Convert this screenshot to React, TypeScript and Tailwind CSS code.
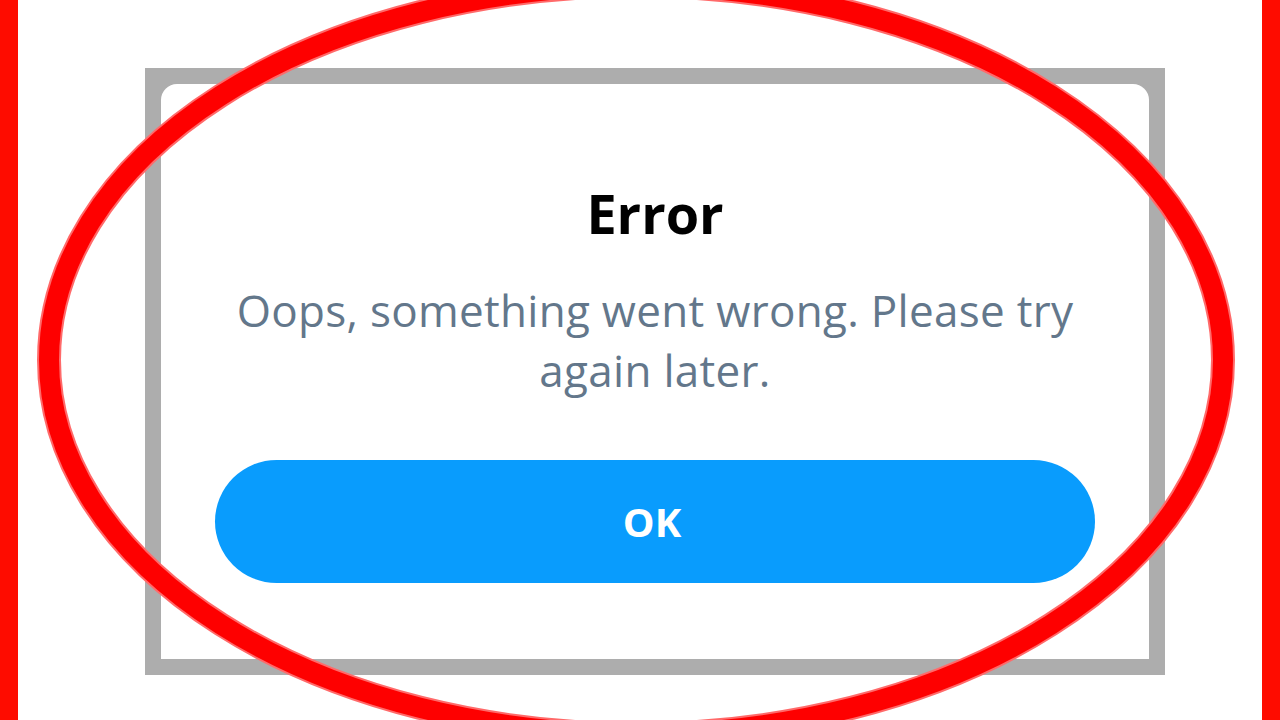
export default function App() {
  return (
    <div className="relative w-[1280px] h-[720px] bg-white flex overflow-hidden font-['Open_Sans',sans-serif]">
      <div className="w-[18px] bg-[#fe0c00]" />
      <div className="flex-1 pl-[127px] pt-[68px]">
        <div className="w-[1020px] h-[607px] bg-[#adadad] p-[16px]">
          <div className="h-full bg-white rounded-t-[16px] flex flex-col items-center pt-[97px] px-[54px] pb-[76px]">
            <h1 className="text-[54px] leading-[64px] font-bold text-black">Error</h1>
            <p className="mt-[35px] text-[44px] leading-[60px] tracking-[0.3px] text-[#63778b] text-center">
              Oops, something went wrong. Please try
              <br />
              again later.
            </p>
            <button
              type="button"
              className="mt-[60px] w-full h-[123px] rounded-full bg-[#099cfd] text-white text-[40px] font-bold pr-[6px]"
            >
              OK
            </button>
          </div>
        </div>
      </div>
      <div className="w-[18px] bg-[#fe0c00]" />
      <svg className="absolute inset-0 pointer-events-none" width="1280" height="720" viewBox="0 0 1280 720">
        <ellipse cx="636" cy="360" rx="587" ry="374" fill="none" stroke="#ff6a6a" strokeWidth="24" />
        <ellipse cx="636" cy="360" rx="587" ry="374" fill="none" stroke="#fe0000" strokeWidth="20" />
      </svg>
    </div>
  );
}
